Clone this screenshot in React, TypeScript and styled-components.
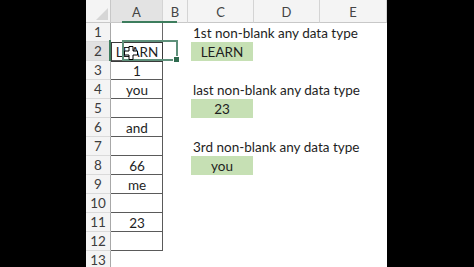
import React from "react";
import styled, { createGlobalStyle } from "styled-components";

const Global = createGlobalStyle`
  html, body { margin: 0; padding: 0; background: #000; overflow: hidden; }
  #root { width: 474px; height: 267px; }
`;

const Frame = styled.div`
  width: 474px;
  height: 267px;
  background: #000;
  display: flex;
  padding-left: 86px;
  box-sizing: border-box;
  overflow: hidden;
`;

const Sheet = styled.div`
  position: relative;
  width: 301px;
  height: 267px;
  background: #fff;
  overflow: hidden;
  display: grid;
  grid-template-columns: 25px 52px 25px 66px 66px 67px;
  grid-template-rows: 23px repeat(13, 19px);
  font-family: Lato, "Liberation Sans", sans-serif;
`;

const Corner = styled.div`
  position: relative;
  background: #f4f4f4;
  border-right: 1px solid #c8c8c8;
  border-bottom: 1px solid #c8c8c8;
  box-sizing: border-box;
  display: flex;
  align-items: flex-end;
  justify-content: flex-end;
  padding: 0 2px 2px 0;
`;

const CornerTriangle = styled.div`
  width: 0;
  height: 0;
  border-left: 12px solid transparent;
  border-bottom: 12px solid #d6d6d6;
`;

const ColHeader = styled.div<{ $selected?: boolean }>`
  background: ${(p) => (p.$selected ? "#e3e3e3" : "#f4f4f4")};
  border-right: 1px solid #d4d4d4;
  border-bottom: 1px solid #c8c8c8;
  box-sizing: border-box;
  display: flex;
  align-items: center;
  justify-content: center;
  color: #444;
  font-size: 13px;
  padding-top: 2px;
`;

const RowHeader = styled.div<{ $selected?: boolean }>`
  background: ${(p) => (p.$selected ? "#e1e1e1" : "#f4f4f4")};
  border-right: 1px solid #a8a8a8;
  border-bottom: 1px solid #dadada;
  box-sizing: border-box;
  display: flex;
  align-items: center;
  justify-content: center;
  color: #3c3c3c;
  font-size: 13.5px;
`;

const Cell = styled.div<{
  $box?: "top" | "mid" | "side";
  $fill?: boolean;
  $align?: "left" | "center";
}>`
  box-sizing: border-box;
  display: flex;
  align-items: center;
  justify-content: ${(p) => (p.$align === "left" ? "flex-start" : "center")};
  padding-left: ${(p) => (p.$align === "left" ? "5px" : "0")};
  white-space: nowrap;
  overflow: visible;
  color: #1e1e1e;
  font-size: 13.5px;
  background: ${(p) => (p.$fill ? "#c6e0b4" : "transparent")};
  margin-left: ${(p) => (p.$fill ? "3px" : "0")};
  margin-right: ${(p) => (p.$fill ? "1px" : "0")};
  box-shadow: ${(p) =>
    p.$box === "top"
      ? "inset 0 1px 0 #5a5a5a, inset 0 -1px 0 #5a5a5a, inset -1px 0 0 #5a5a5a"
      : p.$box === "mid"
      ? "inset 0 -1px 0 #5a5a5a, inset -1px 0 0 #5a5a5a"
      : p.$box === "side"
      ? "inset -1px 0 0 #6a6a6a"
      : "none"};
`;

const Active = styled.div`
  position: absolute;
  left: 25px;
  top: 42px;
  width: 52px;
  height: 20px;
  box-sizing: border-box;
  border: 1px solid #3a3a3a;
  pointer-events: none;
`;

const DragOutline = styled.div`
  position: absolute;
  left: 36px;
  top: 40px;
  width: 56px;
  height: 21px;
  box-sizing: border-box;
  border: 2px solid #5e907a;
  pointer-events: none;
`;

const Handle = styled.div`
  position: absolute;
  right: -4px;
  bottom: -4px;
  width: 5px;
  height: 5px;
  background: #2f6b4f;
  border: 1px solid #fff;
`;

const HeaderMark = styled.div`
  position: absolute;
  left: 36px;
  top: 21px;
  width: 55px;
  height: 2px;
  background: #3d7d5d;
`;

const RowMark = styled.div`
  position: absolute;
  left: 23px;
  top: 40px;
  width: 2px;
  height: 21px;
  background: #3d7d5d;
`;

const Cursor = styled.svg`
  position: absolute;
  left: 38px;
  top: 46px;
  width: 14px;
  height: 14px;
  pointer-events: none;
`;

const cols = ["A", "B", "C", "D", "E"];
const colA: Record<number, string> = {
  2: "LEARN",
  3: "1",
  4: "you",
  6: "and",
  8: "66",
  9: "me",
  11: "23",
};
const labels: Record<number, string> = {
  1: "1st non-blank any data type",
  4: "last non-blank any data type",
  7: "3rd non-blank any data type",
};
const results: Record<number, string> = { 2: "LEARN", 5: "23", 8: "you" };

export default function App() {
  const rows = Array.from({ length: 13 }, (_, i) => i + 1);
  return (
    <>
      <Global />
      <Frame>
        <Sheet>
          <Corner>
            <CornerTriangle />
          </Corner>
          {cols.map((c) => (
            <ColHeader key={c} $selected={c === "A"}>
              {c}
            </ColHeader>
          ))}
          {rows.map((r) => (
            <React.Fragment key={r}>
              <RowHeader $selected={r === 2}>{r}</RowHeader>
              <Cell $box={r === 2 ? "top" : r > 2 && r <= 12 ? "mid" : r === 1 ? "side" : undefined}>
                {colA[r] ?? ""}
              </Cell>
              <Cell />
              {labels[r] ? (
                <Cell $align="left">{labels[r]}</Cell>
              ) : results[r] ? (
                <Cell $fill>{results[r]}</Cell>
              ) : (
                <Cell />
              )}
              <Cell />
              <Cell />
            </React.Fragment>
          ))}
          <HeaderMark />
          <RowMark />
          <Active />
          <DragOutline>
            <Handle />
          </DragOutline>
          <Cursor viewBox="0 0 14 14">
            <path
              d="M5 0.5 H9 V5 H13.5 V9 H9 V13.5 H5 V9 H0.5 V5 H5 Z"
              fill="#fff"
              stroke="#000"
              strokeWidth="1"
            />
          </Cursor>
        </Sheet>
      </Frame>
    </>
  );
}
